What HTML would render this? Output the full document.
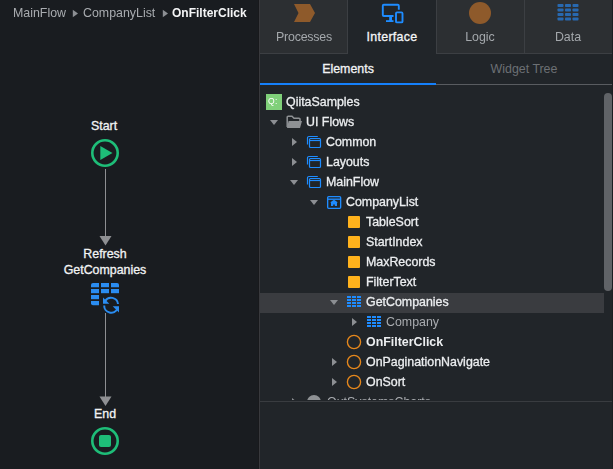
<!DOCTYPE html>
<html><head><meta charset="utf-8">
<style>
html,body{margin:0;padding:0;}
body{width:613px;height:469px;overflow:hidden;position:relative;background:#191c20;font-family:"Liberation Sans",sans-serif;}
.a{position:absolute;}
.t{position:absolute;white-space:nowrap;font-size:12.4px;line-height:15px;}
#left{left:0;top:0;width:258px;height:469px;background:#191c20;}
#sep{left:258px;top:0;width:1px;height:469px;background:#18191c;}
#sep2{left:259px;top:0;width:1px;height:469px;background:#38393d;}
#right{left:260px;top:0;width:352px;height:469px;background:#212529;}
#redge{left:612px;top:0;width:1px;height:469px;background:#1b1e22;}
.tab{position:absolute;top:0;height:53px;background:#2c2f32;}
.tabb{position:absolute;background:#3c3f43;}
.tl{position:absolute;top:30px;width:88px;text-align:center;color:#a4a8ac;font-size:12.4px;line-height:15px;}
.row{position:absolute;left:260px;width:344px;height:20px;}
.tx{position:absolute;white-space:nowrap;font-size:12.4px;line-height:15px;color:#eceef0;top:3px;-webkit-text-stroke:0.3px currentColor;}
.tri-d{position:absolute;width:0;height:0;border-left:4px solid transparent;border-right:4px solid transparent;border-top:5px solid #8c8f93;}
.tri-r{position:absolute;width:0;height:0;border-top:4px solid transparent;border-bottom:4px solid transparent;border-left:5px solid #8c8f93;}
.sq{position:absolute;width:12px;height:12px;background:#ffb21c;border-radius:1px;}
.circ{position:absolute;width:11.5px;height:11.5px;border:1.6px solid #e88a1d;border-radius:50%;}
</style></head><body>
<div id="left" class="a"></div>
<div id="sep" class="a"></div>
<div id="sep2" class="a"></div>
<div id="right" class="a"></div>
<div id="redge" class="a"></div>

<!-- breadcrumb -->
<div class="t" style="left:13px;top:6px;color:#a9acb0;will-change:transform;">MainFlow</div>
<svg class="a" style="left:72px;top:9px" width="7" height="9"><path d="M0.8 0.7 L6 4.5 L0.8 8.3Z" fill="#8c8f93"/></svg>
<div class="t" style="left:83px;top:6px;color:#a9acb0;will-change:transform;">CompanyList</div>
<svg class="a" style="left:162px;top:9px" width="7" height="9"><path d="M0.8 0.7 L6 4.5 L0.8 8.3Z" fill="#8c8f93"/></svg>
<div class="t" style="left:172px;top:6px;color:#f4f5f6;font-weight:bold;font-size:12px;will-change:transform;">OnFilterClick</div>


<!-- flow -->
<div class="t" style="left:91px;top:119px;color:#f2f3f4;-webkit-text-stroke:0.3px #f2f3f4;">Start</div>
<svg class="a" style="left:88px;top:136px" width="34" height="34">
 <circle cx="17" cy="17" r="12.7" fill="none" stroke="#1ebd78" stroke-width="2.6"/>
 <path d="M12.3 10 L24.5 17 L12.3 24Z" fill="#1ebd78"/>
</svg>
<div class="a" style="left:105px;top:169px;width:1px;height:68px;background:#8e8f92;"></div>
<svg class="a" style="left:99px;top:235px" width="13" height="11"><path d="M0.5 1 L12.5 1 L6.5 10.5Z" fill="#8e8f92"/></svg>
<div class="t" style="left:40px;top:246px;width:130px;text-align:center;color:#f2f3f4;line-height:16px;-webkit-text-stroke:0.3px #f2f3f4;">Refresh<br>GetCompanies</div>
<svg class="a" style="left:90px;top:282px" width="32" height="33">
 <g fill="#2a8cf0">
  <path d="M1 3 a2 2 0 0 1 2-2 H9 V5.2 H1Z"/>
  <rect x="11" y="1" width="8" height="4.2"/>
  <path d="M21 1 H27 a2 2 0 0 1 2 2 V5.2 H21Z"/>
  <rect x="1" y="7" width="8" height="4.2"/>
  <rect x="11" y="7" width="8" height="4.2"/>
  <rect x="21" y="7" width="8" height="4.2"/>
  <rect x="1" y="13" width="8" height="4.2"/>
  <path d="M1 19 H9 V23.2 H3 a2 2 0 0 1 -2 -2Z"/>
 </g>
 <g fill="none" stroke="#2a8cf0" stroke-width="2">
  <path d="M15 19.2 A7 7 0 0 1 28 22"/>
  <path d="M27.5 26.8 A7 7 0 0 1 14.2 23.5"/>
 </g>
 <path d="M13 15.5 V21.8 H19.3Z" fill="#2a8cf0"/>
 <path d="M29 30.5 V24.2 H22.7Z" fill="#2a8cf0"/>
</svg>
<div class="a" style="left:105px;top:313px;width:1px;height:85px;background:#8e8f92;"></div>
<svg class="a" style="left:99px;top:396px" width="13" height="11"><path d="M0.5 0.5 L12.5 0.5 L6.5 10Z" fill="#8e8f92"/></svg>
<div class="t" style="left:94px;top:407px;color:#f2f3f4;-webkit-text-stroke:0.3px #f2f3f4;">End</div>
<svg class="a" style="left:88px;top:424px" width="34" height="34">
 <circle cx="17" cy="17" r="12.7" fill="none" stroke="#1ebd78" stroke-width="2.6"/>
 <rect x="11" y="11" width="12" height="12" rx="2" fill="#1ebd78"/>
</svg>

<!-- tabs -->
<div class="tab" style="left:260px;width:87px;"></div>
<div class="tabb" style="left:347px;top:0;width:1px;height:54px;"></div>
<div class="tabb" style="left:260px;top:53px;width:88px;height:1px;"></div>
<div class="tab" style="left:437px;width:87px;"></div>
<div class="tabb" style="left:436px;top:0;width:1px;height:54px;"></div>
<div class="tab" style="left:525px;width:87px;"></div>
<div class="tabb" style="left:524px;top:0;width:1px;height:54px;"></div>
<div class="tabb" style="left:436px;top:53px;width:176px;height:1px;"></div>
<svg class="a" style="left:290px;top:0" width="30" height="26"><path d="M4 4 H20 L25 13 L20 22 H4 L8.5 13Z" fill="#8e5a2b"/></svg>
<svg class="a" style="left:378px;top:0" width="30" height="26"><g fill="none" stroke="#1e8cff" stroke-width="1.9">
 <path d="M20.8 9.8 V5.8 a1 1 0 0 0 -1 -1 H5.8 a1 1 0 0 0 -1 1 V15 a1 1 0 0 0 1 1 H15.5"/>
 <rect x="18" y="12.4" width="6.5" height="10" rx="1"/></g>
 <rect x="11.2" y="16" width="2.8" height="5" fill="#1e8cff"/><rect x="8" y="20.2" width="7.5" height="1.8" fill="#1e8cff"/>
</svg>
<svg class="a" style="left:466px;top:0" width="30" height="26"><circle cx="14" cy="13" r="11" fill="#8e5a2b"/></svg>
<svg class="a" style="left:554px;top:0" width="30" height="26"><g fill="#2869b0">
 <rect x="3.5" y="4" width="6" height="3" rx="0.8"/><rect x="11" y="4" width="6" height="3" rx="0.8"/><rect x="18.5" y="4" width="6" height="3" rx="0.8"/>
 <rect x="3.5" y="8.5" width="6" height="3" rx="0.8"/><rect x="11" y="8.5" width="6" height="3" rx="0.8"/><rect x="18.5" y="8.5" width="6" height="3" rx="0.8"/>
 <rect x="3.5" y="13" width="6" height="3" rx="0.8"/><rect x="11" y="13" width="6" height="3" rx="0.8"/><rect x="18.5" y="13" width="6" height="3" rx="0.8"/>
 <rect x="3.5" y="17.5" width="6" height="3" rx="0.8"/><rect x="11" y="17.5" width="6" height="3" rx="0.8"/><rect x="18.5" y="17.5" width="6" height="3" rx="0.8"/>
</g></svg>
<div class="tl" style="left:260px;letter-spacing:-0.2px;will-change:transform;">Processes</div>
<div class="tl" style="left:348px;letter-spacing:0.3px;color:#f4f5f6;-webkit-text-stroke:0.3px #f4f5f6;">Interface</div>
<div class="tl" style="left:436px;will-change:transform;">Logic</div>
<div class="tl" style="left:524px;will-change:transform;">Data</div>

<!-- subtabs -->
<div class="t" style="left:260px;top:62px;width:176px;text-align:center;color:#f2f3f4;-webkit-text-stroke:0.3px #f2f3f4;">Elements</div>
<div class="t" style="left:436px;top:62px;width:176px;text-align:center;color:#6c7074;">Widget Tree</div>
<div class="a" style="left:436px;top:84px;width:176px;height:1px;background:#595c60;"></div>
<div class="a" style="left:260px;top:83px;width:176px;height:2px;background:#1580fa;"></div>

<!-- tree -->
<div class="a" style="left:260px;top:293px;width:344px;height:20px;background:#3a3c40;"></div>
<div class="a" style="left:604px;top:93px;width:8px;height:198px;background:#606367;border-radius:4px;"></div>
<div class="a" style="left:260px;top:86px;width:344px;height:314px;overflow:hidden;will-change:transform;">
<div class="a" style="left:-260px;top:-86px;width:613px;height:469px;">
<div class="a" style="left:266px;top:94px;width:16px;height:16px;background:#80d07a;"></div>
<div class="a" style="left:268px;top:97px;font-size:8.5px;line-height:9px;color:#ffffff;font-family:'Liberation Sans',sans-serif;letter-spacing:0.5px;">Q:</div>
<div class="tx" style="left:286px;top:95px;">QiitaSamples</div>
<div class="tri-d" style="left:270px;top:120px"></div>
<svg class="a" style="left:286px;top:115px" width="17" height="14"><path d="M1.2 12 V2.2 a1 1 0 0 1 1 -1 H6 L8 3.2 H13 a1 1 0 0 1 1 1 V6" fill="none" stroke="#8e9194" stroke-width="1.5"/><path d="M2.6 6 H16 L14 13 H1Z" fill="#8e9194"/></svg>
<div class="tx" style="left:306px;top:115px;">UI Flows</div>
<div class="tri-r" style="left:292px;top:138px"></div>
<svg class="a" style="left:306px;top:135px" width="17" height="15" fill="none" stroke="#1e8cff" stroke-width="1.2"><path d="M1.5 9.6 V3 a1.5 1.5 0 0 1 1.5 -1.5 H11.8"/><rect x="3.5" y="3.5" width="11" height="9" rx="1"/><path d="M3.5 5.5 H14.5"/></svg>
<div class="tx" style="left:326px;top:135px;">Common</div>
<div class="tri-r" style="left:292px;top:158px"></div>
<svg class="a" style="left:306px;top:155px" width="17" height="15" fill="none" stroke="#1e8cff" stroke-width="1.2"><path d="M1.5 9.6 V3 a1.5 1.5 0 0 1 1.5 -1.5 H11.8"/><rect x="3.5" y="3.5" width="11" height="9" rx="1"/><path d="M3.5 5.5 H14.5"/></svg>
<div class="tx" style="left:326px;top:155px;">Layouts</div>
<div class="tri-d" style="left:290px;top:180px"></div>
<svg class="a" style="left:306px;top:175px" width="17" height="15" fill="none" stroke="#1e8cff" stroke-width="1.2"><path d="M1.5 9.6 V3 a1.5 1.5 0 0 1 1.5 -1.5 H11.8"/><rect x="3.5" y="3.5" width="11" height="9" rx="1"/><path d="M3.5 5.5 H14.5"/></svg>
<div class="tx" style="left:326px;top:175px;">MainFlow</div>
<div class="tri-d" style="left:310px;top:200px"></div>
<svg class="a" style="left:326px;top:195px" width="17" height="15"><g fill="none" stroke="#1e8cff" stroke-width="1.35"><rect x="1.65" y="1.65" width="13" height="11.7" rx="1"/><path d="M1.65 4.2 H14.65"/></g><path d="M8 4.7 L12 7.5 H11 V11 H8.8 V9.4 H7.2 V11 H5 V7.5 H4Z" fill="#1e8cff"/></svg>
<div class="tx" style="left:346px;top:195px;">CompanyList</div>
<div class="sq" style="left:348px;top:216px"></div>
<div class="tx" style="left:366px;top:215px;">TableSort</div>
<div class="sq" style="left:348px;top:236px"></div>
<div class="tx" style="left:366px;top:235px;">StartIndex</div>
<div class="sq" style="left:348px;top:256px"></div>
<div class="tx" style="left:366px;top:255px;">MaxRecords</div>
<div class="sq" style="left:348px;top:276px"></div>
<div class="tx" style="left:366px;top:275px;">FilterText</div>
<div class="tri-d" style="left:330px;top:300px"></div>
<svg class="a" style="left:347px;top:296px" width="14" height="12" fill="#1e8cff"><rect x="0" y="0" width="4" height="2"/><rect x="5" y="0" width="4" height="2"/><rect x="10" y="0" width="4" height="2"/><rect x="0" y="3" width="4" height="2"/><rect x="5" y="3" width="4" height="2"/><rect x="10" y="3" width="4" height="2"/><rect x="0" y="6" width="4" height="2"/><rect x="5" y="6" width="4" height="2"/><rect x="10" y="6" width="4" height="2"/><rect x="0" y="9" width="4" height="2"/><rect x="5" y="9" width="4" height="2"/><rect x="10" y="9" width="4" height="2"/></svg>
<div class="tx" style="left:366px;top:295px;">GetCompanies</div>
<div class="tri-r" style="left:352px;top:318px"></div>
<svg class="a" style="left:367px;top:316px" width="14" height="12" fill="#1e8cff"><rect x="0" y="0" width="4" height="2"/><rect x="5" y="0" width="4" height="2"/><rect x="10" y="0" width="4" height="2"/><rect x="0" y="3" width="4" height="2"/><rect x="5" y="3" width="4" height="2"/><rect x="10" y="3" width="4" height="2"/><rect x="0" y="6" width="4" height="2"/><rect x="5" y="6" width="4" height="2"/><rect x="10" y="6" width="4" height="2"/><rect x="0" y="9" width="4" height="2"/><rect x="5" y="9" width="4" height="2"/><rect x="10" y="9" width="4" height="2"/></svg>
<div class="tx" style="left:386px;top:315px;color:#a9acb0;-webkit-text-stroke:0;">Company</div>
<svg class="a" style="left:346px;top:334px" width="16" height="16"><circle cx="8" cy="8" r="6.6" fill="none" stroke="#e6881c" stroke-width="1.35"/></svg>
<div class="tx" style="left:366px;top:335px;font-weight:bold;-webkit-text-stroke:0;">OnFilterClick</div>
<div class="tri-r" style="left:332px;top:358px"></div>
<svg class="a" style="left:346px;top:354px" width="16" height="16"><circle cx="8" cy="8" r="6.6" fill="none" stroke="#e6881c" stroke-width="1.35"/></svg>
<div class="tx" style="left:366px;top:355px;">OnPaginationNavigate</div>
<div class="tri-r" style="left:332px;top:378px"></div>
<svg class="a" style="left:346px;top:374px" width="16" height="16"><circle cx="8" cy="8" r="6.6" fill="none" stroke="#e6881c" stroke-width="1.35"/></svg>
<div class="tx" style="left:366px;top:375px;">OnSort</div>
<div class="tri-r" style="left:292px;top:398px"></div>
<div class="a" style="left:307px;top:395px;width:14px;height:14px;border-radius:50%;background:#8e9194;"></div>
<div class="tx" style="left:327px;top:395px;color:#a9acb0;-webkit-text-stroke:0;">OutSystemsCharts</div>
</div></div>
<div class="a" style="left:260px;top:401px;width:352px;height:1px;background:#393c40;"></div>
</body></html>
